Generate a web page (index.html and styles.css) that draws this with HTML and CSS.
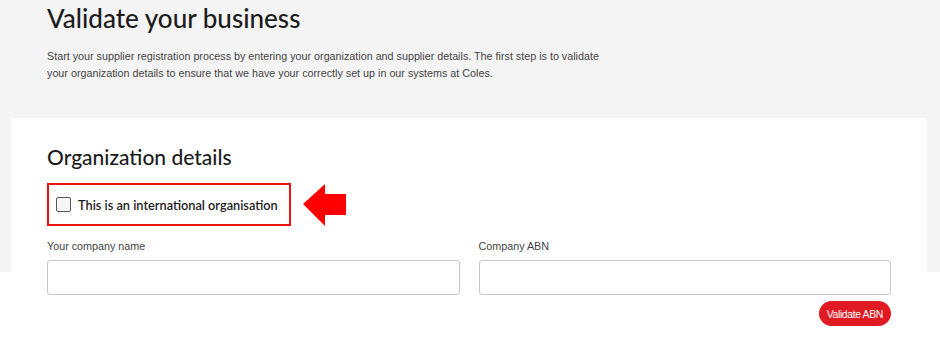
FILE: index.html
```html
<!DOCTYPE html>
<html lang="en">
<head>
    <meta charset="UTF-8">
    <meta name="viewport" content="width=device-width, initial-scale=1.0">
    <title>Validate your business</title>
    <link rel="stylesheet" href="styles.css">
</head>
<body>
    <div class="intro">
        <h1>Validate your business</h1>
        <p>Start your supplier registration process by entering your organization and supplier details. The first step is to validate your organization details to ensure that we have your correctly set up in our systems at Coles.</p>
    </div>

    <div class="card">
        <h2>Organization details</h2>

        <div class="check-row">
            <label class="check-box">
                <input type="checkbox">
                <span>This is an international organisation</span>
            </label>
            <svg class="arrow" width="44" height="42" viewBox="0 0 44 42">
                <polygon points="0,20 22,0 22,10 43,10 43,31 22,31 22,42" fill="#ff0000"/>
            </svg>
        </div>

        <div class="fields">
            <div class="field">
                <label>Your company name</label>
                <input type="text">
            </div>
            <div class="field">
                <label>Company ABN</label>
                <input type="text">
                <button>Validate ABN</button>
            </div>
        </div>
    </div>
</body>
</html>
```

FILE: styles.css
```css
body {
    margin: 0;
    font-family: "Liberation Sans", Arial, sans-serif;
    color: #333;
    background: linear-gradient(#f4f4f4 272px, #fff 272px);
}
h1, h2 {
    font-family: Lato, "DejaVu Sans", sans-serif;
    font-weight: 500;
    color: #1c1c1c;
    margin: 0;
}
.intro {
    padding: 2px 36px 0 47px;
    height: 116px;
}
h1 {
    font-size: 26px;
    line-height: 32px;
}
.intro p {
    margin: 14px 0 0;
    font-size: 10.75px;
    line-height: 17px;
    color: #444;
    max-width: 575px;
}
.card {
    background: #fff;
    margin: 0 13px 0 11px;
    padding: 26px 36px 20px;
}
h2 {
    font-size: 21px;
    line-height: 26px;
}
.check-row {
    display: flex;
    align-items: center;
    gap: 12px;
    margin-top: 13px;
}
.check-box {
    display: flex;
    align-items: center;
    gap: 7px;
    width: 233px;
    height: 39px;
    padding-left: 7px;
    border: 2px solid #ee1111;
    font-family: Lato, "DejaVu Sans", sans-serif;
    font-weight: 600;
    font-size: 12.75px;
    color: #1c1c1c;
}
.check-box input {
    appearance: none;
    width: 15px;
    height: 15px;
    margin: 0;
    border: 1.5px solid #555;
    border-radius: 2px;
    background: #f6f6f6;
}
.fields {
    display: grid;
    grid-template-columns: 1fr 1fr;
    gap: 19px;
    margin-top: 13px;
}
.field {
    display: flex;
    flex-direction: column;
}
.field label {
    font-size: 10.75px;
    color: #444;
    line-height: 14px;
    margin-bottom: 7px;
}
.field input {
    height: 35px;
    box-sizing: border-box;
    border: 1px solid #c8c8c8;
    border-radius: 3px;
    background: #fff;
}
.field button {
    align-self: flex-end;
    margin-top: 6px;
    height: 25px;
    padding: 0 8px;
    border: none;
    border-radius: 13px;
    background: #e01a22;
    color: #fff;
    font-family: "Liberation Sans", Arial, sans-serif;
    font-size: 10.5px;
    letter-spacing: -0.4px;
}
```
